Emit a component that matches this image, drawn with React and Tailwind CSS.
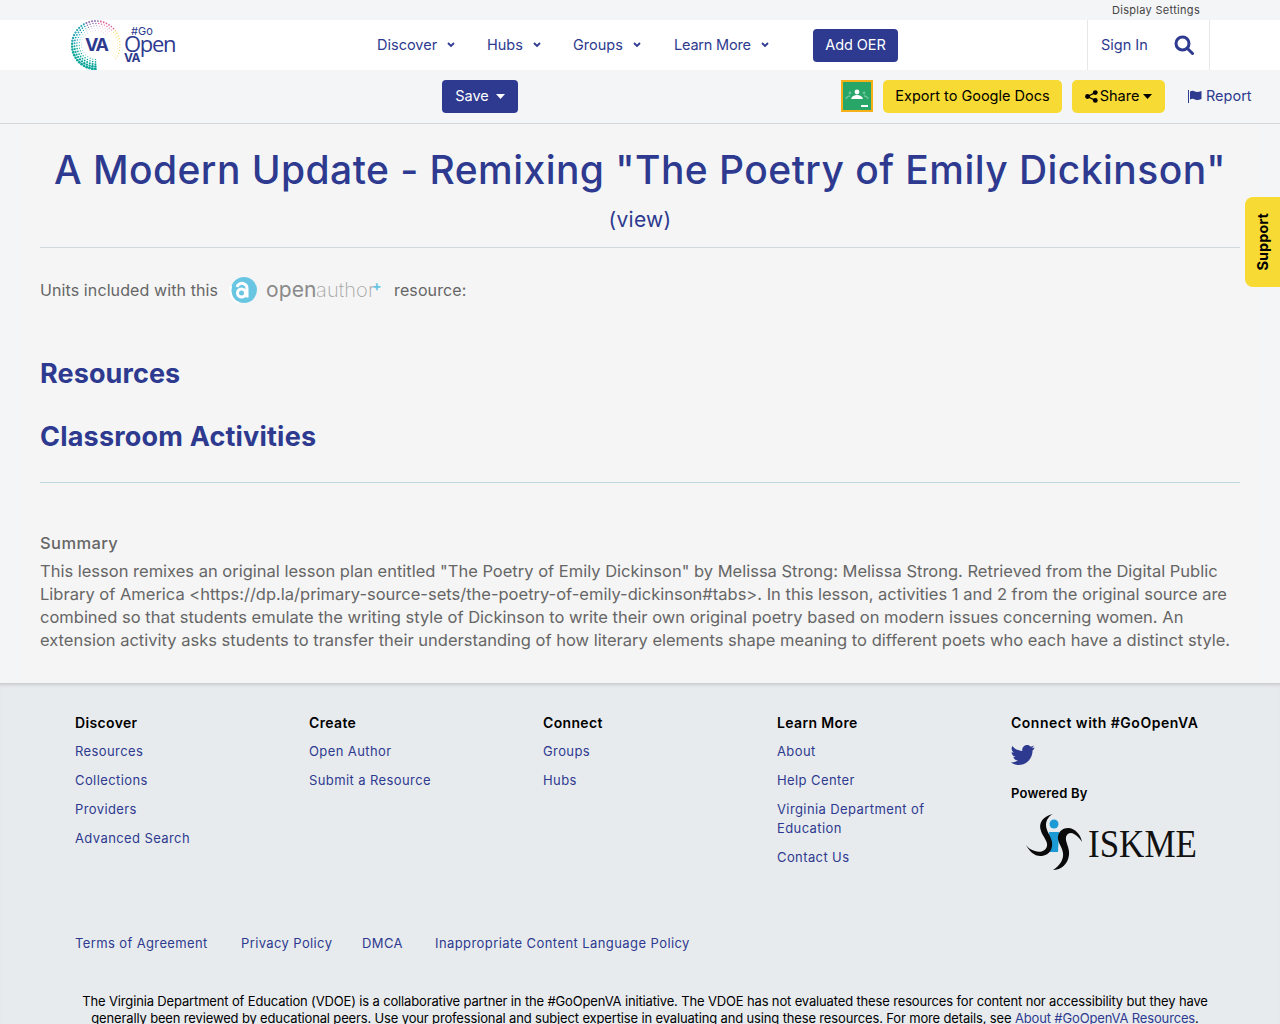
import React from "react";

const F = "font-['Inter','Noto_Sans',sans-serif]";

function Chev() {
  return (
    <svg width="8" height="6" viewBox="0 0 8 6" className="ml-[10px]" fill="none" stroke="#2d3a8f" strokeWidth="1.8"><path d="M1 1l3 3 3-3" /></svg>
  );
}
function Caret({ c = "#fff", cls = "" }) {
  return (
    <svg width="9" height="5" viewBox="0 0 9 5" className={cls}><path d="M0 0h9L4.5 5z" fill={c} /></svg>
  );
}
function Logo() {
  const dots = [];
  for (let r = 0; r < 5; r++) {
    const R = 24 - r * 2.4;
    const n = 44 - r * 4;
    for (let i = 0; i < n; i++) {
      const a = (i / n) * 1.72 * Math.PI + 1.6;
      const t = i / n;
      const col = t < 0.3 ? "#10a79b" : t < 0.48 ? "#2ba6b8" : t < 0.6 ? "#8b6fb0" : t < 0.75 ? "#df5b93" : "#f4d65c";
      dots.push(<circle key={r + "-" + i} cx={25 + R * Math.cos(a)} cy={25 + R * Math.sin(a)} r={Math.max(0.3, 1.5 - r * 0.22 - t * 0.95)} fill={col} />);
    }
  }
  return (
    <svg width="50" height="50" viewBox="0 0 50 50" className="shrink-0">{dots}</svg>
  );
}
function Link({ children }) {
  return <a className="block text-[13px] leading-[19px] tracking-[0.4px] text-[#2d3a8f] mb-[10px] max-w-[170px]">{children}</a>;
}
function Col({ title, items, w }) {
  return (
    <div className={w}>
      <div className="text-[14px] leading-[20px] font-semibold tracking-[0.35px] text-black mb-[9px]">{title}</div>
      {items.map((x) => <Link key={x}>{x}</Link>)}
    </div>
  );
}

export default function App() {
  return (
    <div className={`${F} w-[1280px] h-[1024px] overflow-hidden bg-[#f4f5f7] relative`}>
      <div className="h-[20px] bg-[#f4f5f7] flex justify-end items-center pr-[80px] text-[11px] tracking-[0.3px] text-[#444]">Display Settings</div>
      <div className="h-[50px] bg-white flex items-center">
        <div className="w-[72px]" />
        <div className="w-[305px] flex items-center">
          <div className="relative w-[50px] h-[50px] shrink-0 -ml-[1px]">
            <Logo />
            <span className="absolute left-[14px] top-[15px] text-[18px] leading-[20px] font-bold tracking-[-1.5px] text-[#2d3a8f]">VA</span>
          </div>
          <div className="relative w-[56px] h-[44px] ml-[3px] text-[#2d3a8f]">
            <span className="absolute left-[7px] top-[2px] text-[11px] leading-[12px]">#Go</span>
            <span className="absolute left-[0px] top-[6px] text-[22px] leading-[28px] tracking-[-1.3px] font-['Open_Sans',sans-serif]">Open</span>
            <span className="absolute left-[0px] top-[28px] text-[12px] leading-[14px] font-bold tracking-[-0.5px]">VA</span>
          </div>
        </div>
        <nav className="flex items-center text-[14.5px] text-[#2d3a8f]">
          <span className="flex items-center w-[110px]">Discover<Chev /></span>
          <span className="flex items-center w-[86px]">Hubs<Chev /></span>
          <span className="flex items-center w-[101px]">Groups<Chev /></span>
          <span className="flex items-center w-[139px] tracking-[-0.2px]">Learn More<Chev /></span>
        </nav>
        <button className="h-[33px] w-[85px] rounded-[4px] bg-[#2d3a8f] text-white text-[14.5px] tracking-[-0.1px]">Add OER</button>
        <div className="ml-[189px] w-[123px] h-[50px] border-x border-[#e7e7e7] flex items-center pl-[13px] text-[14.5px] text-[#2d3a8f]">
          <span>Sign In</span>
          <svg className="ml-[26px]" width="20" height="20" viewBox="0 0 20 20" fill="none" stroke="#2d3a8f" strokeWidth="3"><circle cx="8.5" cy="8.5" r="6.5" /><path d="M13.5 13.5L18.5 18.5" strokeLinecap="round" /></svg>
        </div>
      </div>
      <div className="h-[54px] border-b border-[#d5d5d5] flex items-start pt-[10px] bg-[#f4f5f7]">
        <div className="ml-[442px] w-[76px] h-[33px] pb-[2px] rounded-[4px] bg-[#2d3a8f] text-white text-[14.5px] flex items-center justify-center">Save<Caret cls="ml-[7px] mt-[2px]" /></div>
        <div className="ml-[323px] w-[32px] h-[32px] bg-[#27a668] border-[2px] border-[#f8b018] flex items-center justify-center">
          <svg width="28" height="28" viewBox="0 0 28 28"><circle cx="14" cy="10" r="2.4" fill="#fff" /><path d="M8 17c1-3 3-4 6-4s5 1 6 4z" fill="#fff" /><circle cx="7" cy="11" r="1.4" fill="#6cc49a" /><circle cx="21" cy="11" r="1.4" fill="#6cc49a" /><path d="M3 17c.5-2 2-3 4-3M25 17c-.5-2-2-3-4-3" stroke="#6cc49a" strokeWidth="1.5" fill="none" /><rect x="18" y="23" width="7" height="2" fill="#fff" /></svg>
        </div>
        <div className="ml-[10px] w-[179px] h-[33px] pb-[2px] rounded-[5px] bg-[#f7da34] text-black text-[14.5px] flex items-center justify-center">Export to Google Docs</div>
        <div className="ml-[10px] w-[93px] h-[33px] pb-[2px] rounded-[5px] bg-[#f7da34] text-black text-[14.5px] flex items-center justify-center">
          <svg width="13" height="13" viewBox="0 0 13 13" className="mr-[2px] mt-[2px]"><circle cx="2.5" cy="6.5" r="2.4" /><circle cx="10.3" cy="2.6" r="2.4" /><circle cx="10.3" cy="10.4" r="2.4" /><path d="M2.5 6.5L10.3 2.6M2.5 6.5l7.8 3.900" stroke="#000" strokeWidth="1.3" /></svg>
          Share<Caret c="#000" cls="ml-[4px] mt-[2px]" />
        </div>
        <div className="ml-[23px] h-[33px] pb-[2px] flex items-center text-[14.5px] text-[#2d3a8f]">
          <svg width="14" height="13" viewBox="0 0 14 13" className="mr-[4px] mt-[1px]"><path d="M0.5 0v13" stroke="#2d3a8f" strokeWidth="1" /><path d="M2 1.500c2-1 3.500-.8 5 0s3.500.6 6.500-.5v8c-3 1.200-5 1.200-6.500.4s-3-.9-5 0z" fill="#2d3a8f" /></svg>
          Report
        </div>
      </div>
      <main className="h-[559px] bg-[#f5f5f5] mx-[20px] px-[20px] relative">
        <h1 className="pt-[21px] text-center text-[39px] leading-[50px] font-medium tracking-[0.45px] text-[#2d3a8f] whitespace-nowrap">A Modern Update - Remixing "The Poetry of Emily Dickinson"</h1>
        <div className="text-center text-[21px] tracking-[0.3px] leading-[30px] mt-[10px] text-[#2d3a8f]">(view)</div>
        <div className="mt-[12px] border-t border-[#d0d8dc]" />
        <div className="mt-[26px] h-[32px] flex items-center text-[16px] tracking-[0.1px] text-[#666]">
          <span>Units included with this</span>
          <svg width="30" height="30" viewBox="0 0 30 30" className="ml-[10px]"><circle cx="16" cy="15" r="13" fill="#69c6e3" /><path d="M9 12c1-3 4-4 6-3.500s4 2 4 5v9" fill="none" stroke="#fff" strokeWidth="3" /><circle cx="13.500" cy="18" r="4" fill="none" stroke="#fff" strokeWidth="3" /><path d="M3 11c-2 7 1 15 8 17" fill="none" stroke="#fff" strokeWidth="2" /></svg>
          <span className="ml-[8px] text-[21px] text-[#8a8a8a] w-[50px]">open</span>
          <span className="text-[20px] text-[#a6a6a6] w-[56px] font-extralight whitespace-nowrap">author</span>
          <span className="text-[#69c6e3] text-[14px] font-bold -mt-[10px] w-[13px]">+</span>
          <span className="ml-[9px]">resource:</span>
        </div>
        <h2 className="mt-[50px] text-[27px] leading-[36px] font-bold tracking-[0.1px] text-[#2d3a8f]">Resources</h2>
        <h2 className="mt-[27px] text-[27px] leading-[36px] font-bold tracking-[0.2px] text-[#2d3a8f]">Classroom Activities</h2>
        <div className="mt-[27px] border-t border-[#bfdadf]" />
        <div className="mt-[49px] mb-[5px] text-[16.5px] leading-[23px] font-medium tracking-[0.4px] text-[#666]">Summary</div>
        <p className="text-[16.5px] leading-[23px] text-[#666]">
          This lesson remixes an original lesson plan entitled "The Poetry of Emily Dickinson" by Melissa Strong: Melissa Strong. Retrieved from the Digital Public Library of America &lt;https://dp.la/primary-source-sets/the-poetry-of-emily-dickinson#tabs&gt;. In this lesson, activities 1 and 2 from the original source are combined so that students emulate the writing style of Dickinson to write their own original poetry based on modern issues concerning women. An extension activity asks students to transfer their understanding of how literary elements shape meaning to different poets who each have a distinct style.
        </p>
      </main>
      <div className="absolute right-0 top-[197px] w-[35px] h-[90px] rounded-l-[8px] bg-[#f7da34] flex items-center justify-center">
        <span className="text-[14.5px] font-bold text-black -rotate-90 whitespace-nowrap">Support</span>
      </div>
      <footer className="h-[341px] bg-[#e8ebee] shadow-[inset_0_4px_4px_-3px_rgba(0,0,0,0.2)] relative pt-[30px] px-[75px]">
        <div className="flex h-[200px]">
          <Col w="w-[234px]" title="Discover" items={["Resources", "Collections", "Providers", "Advanced Search"]} />
          <Col w="w-[234px]" title="Create" items={["Open Author", "Submit a Resource"]} />
          <Col w="w-[234px]" title="Connect" items={["Groups", "Hubs"]} />
          <Col w="w-[234px]" title="Learn More" items={["About", "Help Center", "Virginia Department of Education", "Contact Us"]} />
          <div>
            <div className="text-[14px] leading-[20px] font-semibold tracking-[0.5px] text-black whitespace-nowrap">Connect with #GoOpenVA</div>
            <svg width="24" height="20" viewBox="0 0 24 20" className="mt-[12px]"><path d="M23.500 2.400c-.9.400-1.800.7-2.800.8 1-.6 1.800-1.600 2.100-2.700-.9.600-2 1-3.100 1.200C18.800.7 17.500 0 16.100 0c-2.700 0-4.900 2.200-4.900 4.900 0 .4 0 .8.100 1.100C7.300 5.800 3.700 3.900 1.300.9.900 1.600.6 2.500.6 3.400c0 1.700.9 3.200 2.200 4.100-.8 0-1.600-.2-2.200-.6v.1c0 2.400 1.700 4.400 3.900 4.800-.4.100-.8.200-1.300.2-.3 0-.6 0-.9-.1.600 2 2.400 3.400 4.600 3.400-1.700 1.300-3.800 2.100-6.100 2.100-.4 0-.8 0-1.200-.1C2.200 19.200 4.800 20 7.500 20c9 0 14-7.500 14-14v-.6c1-.7 1.800-1.600 2-3z" fill="#2d3a8f" /></svg>
            <div className="mt-[19px] text-[13px] leading-[18px] font-semibold tracking-[0.2px] text-black">Powered By</div>
            <div className="flex items-center mt-[11px] ml-[15px]">
              <svg width="58" height="58" viewBox="0 0 58 58">
                <circle cx="28" cy="11" r="4.500" fill="#1b9ad6" />
                <path d="M23 19h10l-1 20h-8z" fill="#1b9ad6" />
                <path d="M27 1C17 3 12 10 15 18 17 24 22 28 21 33 20 38 14 40 9 38 5 37 2 35 0 32 3 38 9 44 16 43 24 42 27 35 26 29 25 23 20 18 20 12 20 7 23 3 27 1Z" fill="#0a0a0a" />
                <path d="M56 29C55 22 49 15 42 15 37 15 33 18 32 23 31 29 36 33 37 40 38 47 33 53 27 57 35 57 42 51 43 42 44 35 39 29 40 24 41 20 45 19 48 21 52 23 54 26 56 29Z" fill="#0a0a0a" />
              </svg>
              <span className="text-[35px] leading-[40px] font-['Liberation_Serif',serif] text-[#111] ml-[4px] mt-[3px] scale-y-[1.17] tracking-[0px]">ISKME</span>
            </div>
          </div>
        </div>
        <div className="flex text-[13px] leading-[20px] tracking-[0.38px] text-[#2d3a8f] mt-[20px]">
          <span className="w-[166px]">Terms of Agreement</span>
          <span className="w-[121px]">Privacy Policy</span>
          <span className="w-[73px]">DMCA</span>
          <span className="tracking-[0.42px]">Inappropriate Content Language Policy</span>
        </div>
        <p className="absolute left-[80px] w-[1130px] top-[310px] text-center text-[13px] leading-[17px] tracking-[-0.15px] text-black">
          The Virginia Department of Education (VDOE) is a collaborative partner in the #GoOpenVA initiative. The VDOE has not evaluated these resources for content nor accessibility but they have generally been reviewed by educational peers. Use your professional and subject expertise in evaluating and using these resources. For more details, see <span className="text-[#2d3a8f]">About #GoOpenVA Resources</span>.
        </p>
      </footer>
    </div>
  );
}
